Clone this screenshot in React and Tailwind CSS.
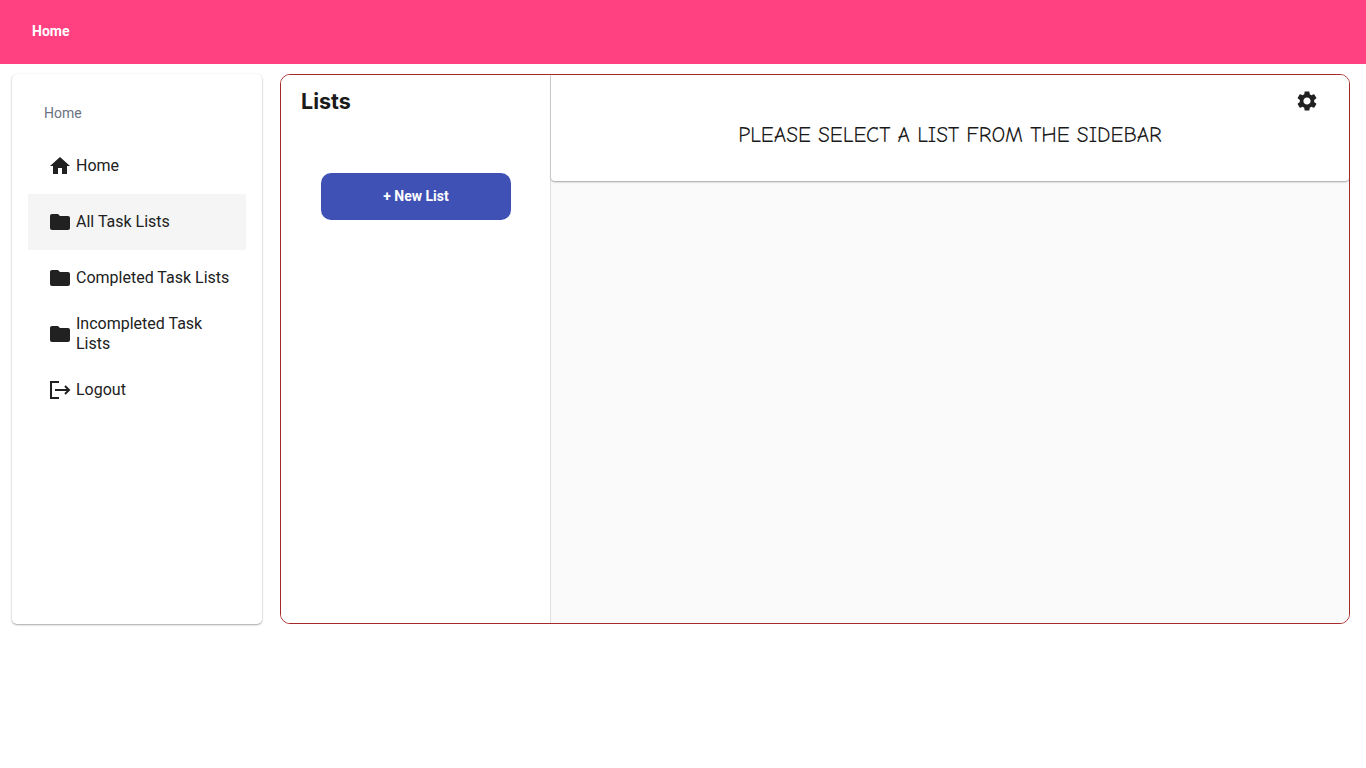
const navItems = [
  { label: "Home", icon: "home" },
  { label: "All Task Lists", icon: "folder", active: true },
  { label: "Completed Task Lists", icon: "folder" },
  { label: "Incompleted Task Lists", icon: "folder" },
  { label: "Logout", icon: "logout" },
];

const iconPaths = {
  home: "M10 20v-6h4v6h5v-8h3L12 3 2 12h3v8z",
  folder:
    "M10 4H4c-1.1 0-1.99.9-1.99 2L2 18c0 1.1.9 2 2 2h16c1.1 0 2-.9 2-2V8c0-1.1-.9-2-2-2h-8l-2-2z",
  settings:
    "M19.14 12.94c.04-.3.06-.61.06-.94 0-.32-.02-.64-.07-.94l2.03-1.58c.18-.14.23-.41.12-.61l-1.92-3.32c-.12-.22-.37-.29-.59-.22l-2.39.96c-.5-.38-1.03-.7-1.62-.94l-.36-2.54c-.04-.24-.24-.41-.48-.41h-3.84c-.24 0-.43.17-.47.41l-.36 2.54c-.59.24-1.13.57-1.62.94l-2.39-.96c-.22-.08-.47 0-.59.22L2.74 8.87c-.12.21-.08.47.12.61l2.03 1.58c-.05.3-.09.63-.09.94s.02.64.07.94l-2.03 1.58c-.18.14-.23.41-.12.61l1.92 3.32c.12.22.37.29.59.22l2.39-.96c.5.38 1.03.7 1.62.94l.36 2.54c.05.24.24.41.48.41h3.84c.24 0 .44-.17.47-.41l.36-2.54c.59-.24 1.13-.56 1.62-.94l2.39.96c.22.08.47 0 .59-.22l1.92-3.32c.12-.22.07-.47-.12-.61l-2.01-1.58zM12 15.6c-1.98 0-3.6-1.62-3.6-3.6s1.62-3.6 3.6-3.6 3.6 1.62 3.6 3.6-1.62 3.6-3.6 3.6z",
};

function Icon({ name, className }) {
  if (name === "logout") {
    return (
      <svg viewBox="0 0 24 24" fill="none" stroke="currentColor" strokeWidth="2" className={className}>
        <path d="M11 4H3v16h8" />
        <path d="M7 12h14M17 8l4 4-4 4" />
      </svg>
    );
  }
  return (
    <svg viewBox="0 0 24 24" fill="currentColor" className={className}>
      <path d={iconPaths[name]} />
    </svg>
  );
}

export default function App() {
  return (
    <div className="min-h-[768px] bg-white font-['Roboto',sans-serif] text-[#212121]">
      <header className="h-16 bg-[#ff4081] flex items-center px-8 pb-[2px]">
        <span className="text-sm font-bold text-white">Home</span>
      </header>

      <div className="flex gap-[18px] pt-[10px] pl-3 pr-4">
        <aside className="w-[250px] h-[550px] shrink-0 bg-white rounded-[5px] px-4 shadow-[0_1px_2px_rgba(0,0,0,0.35),0_0_2px_rgba(0,0,0,0.06)]">
          <div className="h-16 flex items-center pl-4 pt-[13px] text-sm text-[#6b7280]">
            Home
          </div>
          <nav>
            {navItems.map((item) => (
              <div
                key={item.label}
                className={`min-h-14 py-2 pl-5 pr-2 flex items-center gap-1 text-base leading-5 ${
                  item.active ? "bg-[#f5f5f5]" : ""
                }`}
              >
                <Icon name={item.icon} className="w-6 h-6 shrink-0 text-[#212121]" />
                <span>{item.label}</span>
              </div>
            ))}
          </nav>
        </aside>

        <main className="flex-1 h-[550px] flex border border-[#a52a2a] rounded-[10px] overflow-hidden">
          <section className="w-[270px] shrink-0 border-r border-[#e0e0e0] bg-white">
            <h2 className="pl-5 pt-[11px] text-[21.5px] leading-[30px] font-bold text-[#1a1a1a] font-['Inter',sans-serif]">
              Lists
            </h2>
            <div className="pl-10 pt-[57px]">
              <button className="w-[190px] h-[47px] pb-[2px] rounded-[10px] bg-[#3f51b5] text-sm font-bold text-white">
                + New List
              </button>
            </div>
          </section>

          <section className="flex-1 bg-[#fafafa]">
            <div className="h-[106px] bg-white rounded-b-[4px] shadow-[0_1px_2px_rgba(0,0,0,0.35),0_0_2px_rgba(0,0,0,0.06)]">
              <div className="flex justify-end pt-[14px] pr-[30px]">
                <Icon name="settings" className="w-6 h-6 text-[#212121]" />
              </div>
              <p className="pt-[8px] text-center text-[21.4px] leading-7 text-[#1a1a1a] font-['Comic_Sans_MS','Comic_Neue',cursive]">
                PLEASE SELECT A LIST FROM THE SIDEBAR
              </p>
            </div>
          </section>
        </main>
      </div>
    </div>
  );
}
